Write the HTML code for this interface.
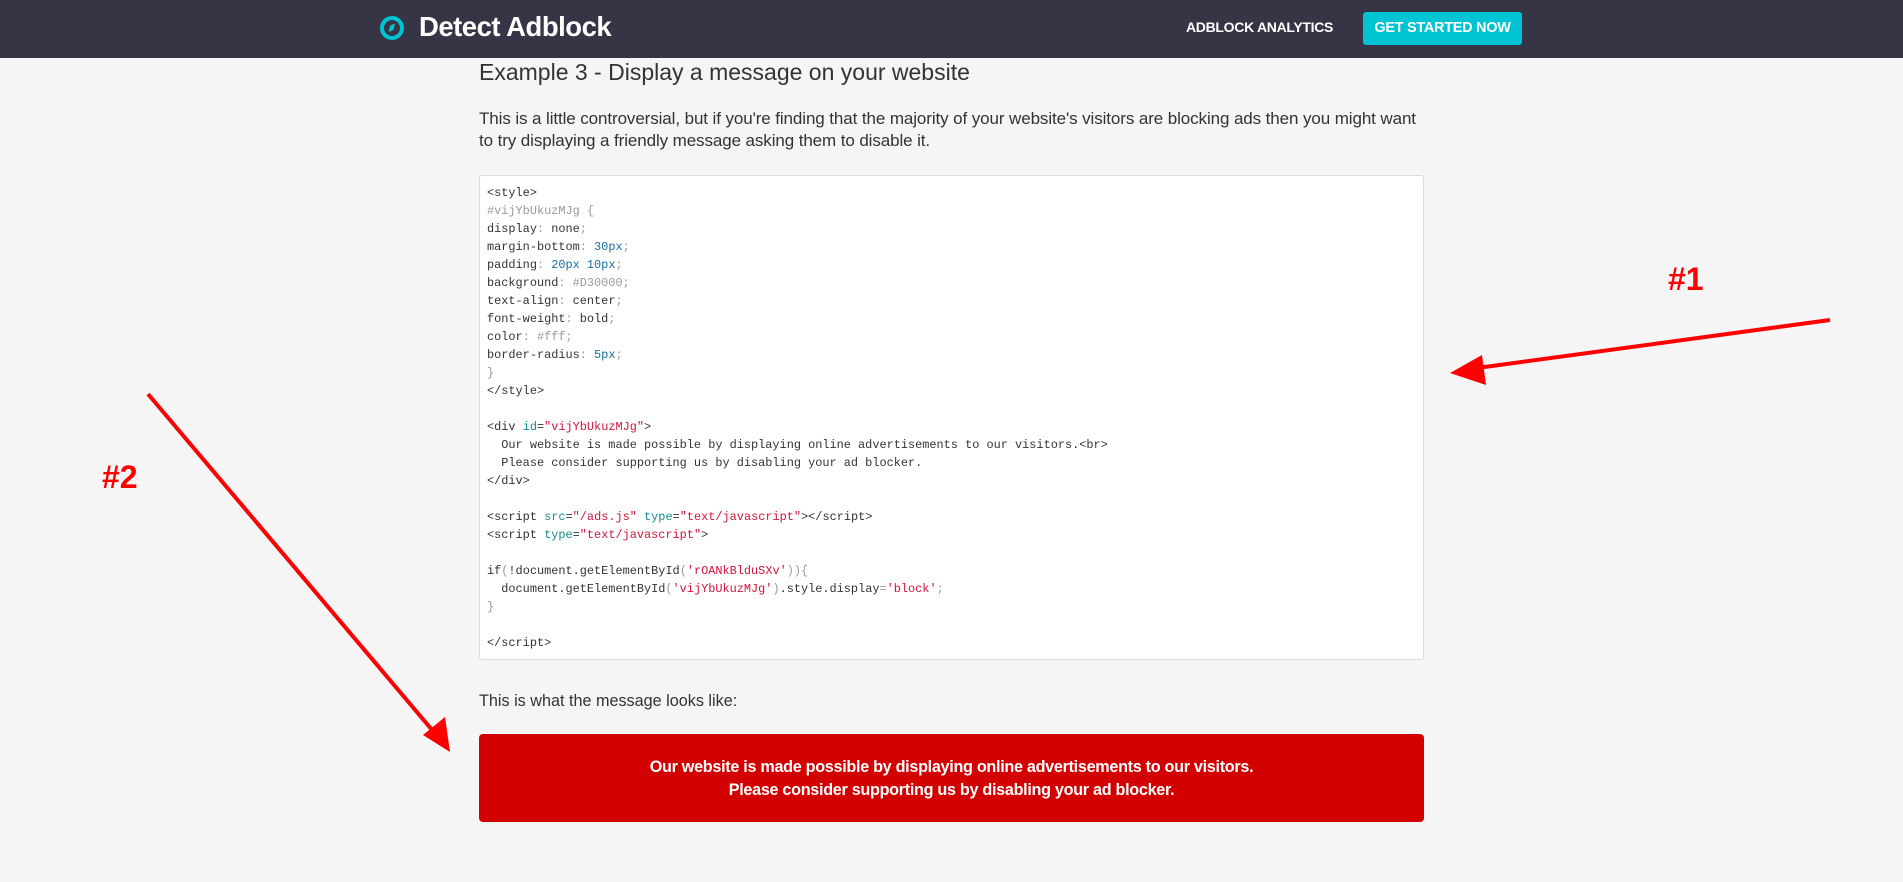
<!DOCTYPE html>
<html><head><meta charset="utf-8"><style>
*{margin:0;padding:0;box-sizing:border-box}
body{width:1903px;height:882px;background:#f5f5f5;font-family:"Liberation Sans",sans-serif;position:relative;overflow:hidden;color:#333}
.hdr{position:absolute;left:0;top:0;width:1903px;height:58px;background:#363545}
.logo{position:absolute;left:419px;top:11px;font-size:27.5px;font-weight:bold;color:#fff;letter-spacing:-0.5px}
.icon{position:absolute;left:379px;top:15px}
.nav{position:absolute;left:1186px;top:19px;font-size:14px;font-weight:bold;color:#fff;letter-spacing:-0.3px}
.btn{position:absolute;left:1363px;top:12px;width:159px;height:33px;background:#00c4d4;border-radius:3px;color:#fff;font-weight:bold;font-size:14.5px;text-align:center;line-height:33px;letter-spacing:-0.3px}
h1{position:absolute;left:479px;top:59px;font-size:23px;font-weight:normal;color:#333}
.p{position:absolute;left:479px;top:108px;width:950px;font-size:17px;line-height:22px;color:#333;letter-spacing:-0.1px}
.code{position:absolute;left:479px;top:175px;width:945px;height:485px;background:#fff;border:1px solid #ddd;border-radius:3px;padding:8px 7px;font-family:"Liberation Mono",monospace;font-size:11.9px;line-height:18px;white-space:pre;color:#333}
.g{color:#999}.b{color:#1a6d9a}.r{color:#d1143c}.t{color:#168c8c}
.p2{position:absolute;left:479px;top:692px;font-size:16.2px;color:#333}
.msg{position:absolute;left:479px;top:734px;width:945px;height:88px;background:#d30000;border-radius:4px;color:#fff;font-weight:bold;font-size:16.2px;text-align:center;padding-top:22px;line-height:23px;letter-spacing:-0.3px}
.lab{position:absolute;color:#f00;font-weight:bold;font-size:32px}
</style></head><body>
<div class="hdr"></div>
<svg class="icon" width="26" height="26" viewBox="0 0 26 26"><circle cx="13" cy="13" r="10" fill="none" stroke="#00c4d4" stroke-width="4"/><path d="M16 8.5 L14.3 15 L9.5 17 L11.2 10.5 Z" fill="#00c4d4"/></svg>
<div class="logo">Detect Adblock</div>
<div class="nav">ADBLOCK ANALYTICS</div>
<div class="btn">GET STARTED NOW</div>
<h1>Example 3 - Display a message on your website</h1>
<div class="p">This is a little controversial, but if you're finding that the majority of your website's visitors are blocking ads then you might want to try displaying a friendly message asking them to disable it.</div>
<div class="code">&lt;style&gt;
<span class="g">#vijYbUkuzMJg {</span>
display<span class="g">:</span> none<span class="g">;</span>
margin-bottom<span class="g">:</span> <span class="b">30px</span><span class="g">;</span>
padding<span class="g">:</span> <span class="b">20px 10px</span><span class="g">;</span>
background<span class="g">: #D30000;</span>
text-align<span class="g">:</span> center<span class="g">;</span>
font-weight<span class="g">:</span> bold<span class="g">;</span>
color<span class="g">: #fff;</span>
border-radius<span class="g">:</span> <span class="b">5px</span><span class="g">;</span>
<span class="g">}</span>
&lt;/style&gt;

&lt;div <span class="t">id</span>=<span class="r">"vijYbUkuzMJg"</span>&gt;
  Our website is made possible by displaying online advertisements to our visitors.&lt;br&gt;
  Please consider supporting us by disabling your ad blocker.
&lt;/div&gt;

&lt;script <span class="t">src</span>=<span class="r">"/ads.js"</span> <span class="t">type</span>=<span class="r">"text/javascript"</span>&gt;&lt;/script&gt;
&lt;script <span class="t">type</span>=<span class="r">"text/javascript"</span>&gt;

if<span class="g">(</span>!document.getElementById<span class="g">(</span><span class="r">'rOANkBlduSXv'</span><span class="g">)){</span>
  document.getElementById<span class="g">(</span><span class="r">'vijYbUkuzMJg'</span><span class="g">)</span>.style.display<span class="g">=</span><span class="r">'block'</span><span class="g">;</span>
<span class="g">}</span>

&lt;/script&gt;</div>
<div class="p2">This is what the message looks like:</div>
<div class="msg">Our website is made possible by displaying online advertisements to our visitors.<br>Please consider supporting us by disabling your ad blocker.</div>
<div class="lab" style="left:1668px;top:261px">#1</div>
<div class="lab" style="left:102px;top:459px">#2</div>
<svg style="position:absolute;left:0;top:0" width="1903" height="882">
<line x1="1830" y1="320" x2="1470" y2="369" stroke="#f00" stroke-width="4"/>
<polygon points="1450,373 1482,355 1486,385" fill="#f00"/>
<line x1="148" y1="394" x2="438" y2="737" stroke="#f00" stroke-width="4"/>
<polygon points="450,752 423,735 445,717" fill="#f00"/>
</svg>
</body></html>
